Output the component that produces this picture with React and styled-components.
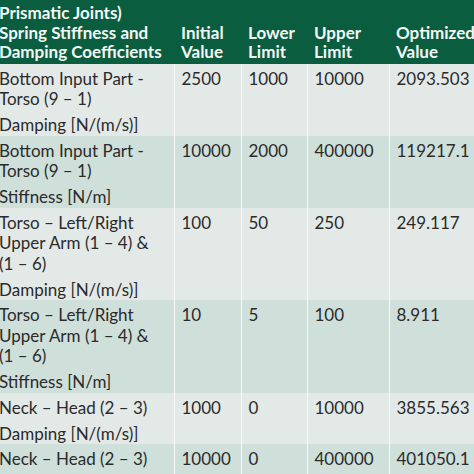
import React from "react";
import styled, { createGlobalStyle } from "styled-components";

const GlobalStyle = createGlobalStyle`
	html, body {
		margin: 0;
		padding: 0;
		background: #ffffff;
		overflow: hidden;
	}
`;

const Container = styled.div`
	width: 474px;
	height: 474px;
	overflow: hidden;
	background: #e3e9e7;
`;

const Table = styled.table`
	table-layout: fixed;
	border-collapse: collapse;
	width: 560px;
	margin-left: -2px;
	font-family: Lato, "Open Sans", sans-serif;
	font-size: 17px;
	color: #2b2b2b;
`;

const Head = styled.th`
	background: #0b5d3f;
	color: #f3f8f5;
	font-weight: 700;
	text-align: left;
	vertical-align: bottom;
	line-height: 19.5px;
	padding: 3px 6px 2px 7px;
	&:first-child {
		padding-left: 1px;
	}
`;

const Row = styled.tr`
	background: ${(props) => (props.shade ? "#cfdfda" : "#e3e9e7")};
`;

const Cell = styled.td`
	vertical-align: top;
	line-height: 20.5px;
	padding: 5px 6px 0 7px;
	border-left: 1px solid #f6f9f8;
	&:first-child {
		border-left: none;
		padding-left: 1px;
	}
`;

const Name = styled.div``;

const Unit = styled.div`
	margin-top: 5.5px;
`;

const rows = [
	{ name: "Bottom Input Part - Torso (9\u00a0–\u00a01)", unit: "Damping [N/(m/s)]", vals: ["2500", "1000", "10000", "2093.503"] },
	{ name: "Bottom Input Part - Torso (9\u00a0–\u00a01)", unit: "Stiffness [N/m]", vals: ["10000", "2000", "400000", "119217.1"] },
	{ name: "Torso – Left/Right Upper Arm (1\u00a0–\u00a04) & (1\u00a0–\u00a06)", unit: "Damping [N/(m/s)]", vals: ["100", "50", "250", "249.117"] },
	{ name: "Torso – Left/Right Upper Arm (1\u00a0–\u00a04) & (1\u00a0–\u00a06)", unit: "Stiffness [N/m]", vals: ["10", "5", "100", "8.911"] },
	{ name: "Neck – Head (2\u00a0–\u00a03)", unit: "Damping [N/(m/s)]", vals: ["1000", "0", "10000", "3855.563"] },
	{ name: "Neck – Head (2\u00a0–\u00a03)", unit: "Stiffness [N/m]", vals: ["10000", "0", "400000", "401050.1"] },
];

const App = () => {
	return (
		<Container>
			<GlobalStyle />
			<Table>
				<colgroup>
					<col style={{ width: 176 }} />
					<col style={{ width: 67 }} />
					<col style={{ width: 66 }} />
					<col style={{ width: 82 }} />
					<col style={{ width: 169 }} />
				</colgroup>
				<thead>
					<tr>
						<Head>
							Prismatic Joints)
							<br />
							Spring Stiffness and Damping Coefficients
						</Head>
						<Head>Initial Value</Head>
						<Head>Lower Limit</Head>
						<Head>Upper Limit</Head>
						<Head>
							Optimized
							<br />
							Value
						</Head>
					</tr>
				</thead>
				<tbody>
					{rows.map((r, i) => (
						<Row key={i} shade={i % 2 === 1}>
							<Cell>
								<Name>{r.name}</Name>
								<Unit>{r.unit}</Unit>
							</Cell>
							{r.vals.map((v, j) => (
								<Cell key={j}>{v}</Cell>
							))}
						</Row>
					))}
				</tbody>
			</Table>
		</Container>
	);
};

export default App;
